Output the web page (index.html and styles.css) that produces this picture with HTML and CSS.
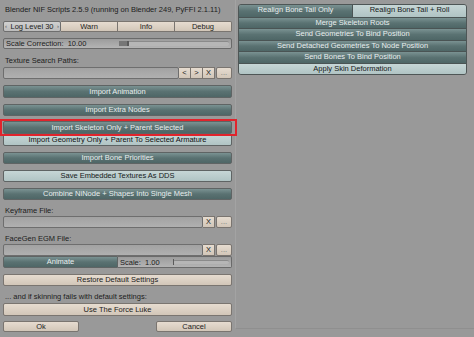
FILE: index.html
```html
<!DOCTYPE html>
<html lang="en">
<head>
  <meta charset="UTF-8" />
  <title>Blender NIF Scripts</title>
  <link rel="stylesheet" href="styles.css">
</head>
<body>
  <div class="screen">
    <div class="col left">
      <div class="title">Blender NIF Scripts 2.5.9 (running on Blender 249, PyFFI 2.1.11)</div>

      <div class="row log">
        <div class="menu"><span class="arr">&#8249;</span>Log Level 30<span class="arr">&#8250;</span></div>
        <div class="btn beige">Warn</div>
        <div class="btn beige">Info</div>
        <div class="btn beige">Debug</div>
      </div>

      <div class="row slider">
        <span class="slabel">Scale Correction:&nbsp; 10.00</span>
        <div class="track"><div class="thumb"></div></div>
      </div>

      <div class="label">Texture Search Paths:</div>
      <div class="row field-row tight">
        <div class="field"></div>
        <div class="btn beige small">&lt;</div>
        <div class="btn beige small">&gt;</div>
        <div class="btn beige small">X</div>
        <div class="btn beige dots">...</div>
      </div>

      <div class="btn dark tall">Import Animation</div>
      <div class="btn dark">Import Extra Nodes</div>
      <div class="skel-wrap">
        <div class="btn dark tall">Import Skeleton Only + Parent Selected</div>
        <div class="btn on flat">Import Geometry Only + Parent To Selected Armature</div>
        <div class="hilite"></div>
      </div>
      <div class="btn dark near">Import Bone Priorities</div>
      <div class="btn on near">Save Embedded Textures As DDS</div>
      <div class="btn dark">Combine NiNode + Shapes Into Single Mesh</div>

      <div class="label snug">Keyframe File:</div>
      <div class="row field-row flush">
        <div class="field"></div>
        <div class="btn beige small">X</div>
        <div class="btn beige dots">...</div>
      </div>

      <div class="label snug">FaceGen EGM File:</div>
      <div class="row field-row flush">
        <div class="field"></div>
        <div class="btn beige small">X</div>
        <div class="btn beige dots">...</div>
      </div>
      <div class="row anim-row flush">
        <div class="btn dark anim">Animate</div>
        <div class="slider scale">
          <span class="slabel">Scale:&nbsp; 1.00</span>
          <div class="track thin"><div class="tick"></div></div>
        </div>
      </div>

      <div class="btn beige">Restore Default Settings</div>
      <div class="label snug">... and if skinning fails with default settings:</div>
      <div class="btn beige tall tight">Use The Force Luke</div>

      <div class="row buttons">
        <div class="btn beige half">Ok</div>
        <div class="btn beige half">Cancel</div>
      </div>
    </div>

    <div class="col right">
      <div class="group">
        <div class="grow">
          <div class="btn dark seg">Realign Bone Tail Only</div>
          <div class="btn on seg">Realign Bone Tail + Roll</div>
        </div>
        <div class="btn dark seg">Merge Skeleton Roots</div>
        <div class="btn dark seg">Send Geometries To Bind Position</div>
        <div class="btn dark seg">Send Detached Geometries To Node Position</div>
        <div class="btn dark seg">Send Bones To Bind Position</div>
        <div class="btn on seg">Apply Skin Deformation</div>
      </div>
    </div>
  </div>
</body>
</html>
```

FILE: styles.css
```css
html, body {
  margin: 0;
  padding: 0;
  background-color: #999999;
  font-family: 'Liberation Sans', Arial, sans-serif;
  font-size: 7.5px;
  color: #1c1c1c;
  overflow: hidden;
}

* {
  box-sizing: border-box;
}

.screen {
  display: flex;
  gap: 3px;
  padding-left: 3px;
  width: 474px;
  height: 337px;
}

.col {
  display: flex;
  flex-direction: column;
  width: 229px;
}

.title {
  margin-top: 5px;
  height: 10px;
  line-height: 10px;
  padding-left: 2px;
  white-space: nowrap;
}

.row {
  display: flex;
  margin-top: 6px;
}

.label {
  margin-top: 7px;
  height: 10px;
  line-height: 10px;
  padding-left: 2px;
}

.label.snug { margin-top: 6px; }

.tight { margin-top: 1px !important; }
.flush { margin-top: 0 !important; }
.near { margin-top: 5px; }

.btn {
  height: 12px;
  line-height: 10px;
  margin-top: 6px;
  text-align: center;
  white-space: nowrap;
  border: 1px solid #5f6464;
  border-radius: 2px;
}

.row .btn { margin-top: 0; }

.tall { height: 13px; line-height: 11px; }

.dark {
  background: linear-gradient(#7a9292, #5a7272 50%, #4e6666);
  color: #e8eeee;
}

.on {
  background: linear-gradient(#c6d6d6, #b0c4c4);
  color: #161a1a;
}

.beige {
  background: linear-gradient(#e6dcd0, #d2c6b8);
  color: #1c1c1c;
  border-color: #7a7570;
}

.log .btn, .log .menu {
  height: 11px;
  line-height: 9px;
}

.menu {
  width: 58px;
  display: flex;
  justify-content: space-between;
  padding: 0 1px;
  background: linear-gradient(#d0d0d0, #bcbcbc);
  border: 1px solid #6e6e6e;
  border-radius: 2px;
  white-space: nowrap;
}

.arr {
  font-size: 6px;
  color: #555;
}

.log .btn { flex: 1; border-left: none; border-radius: 0; }
.log .btn:last-child { border-radius: 0 2px 2px 0; }

.slider {
  height: 11px;
  display: flex;
  align-items: center;
  background: linear-gradient(#9c9c9c, #b4b4b4);
  border: 1px solid #6a6a6a;
  border-radius: 2px;
  padding-left: 2px;
}

.slabel {
  width: 113px;
  flex: none;
}

.track {
  flex: 1;
  height: 5px;
  margin-right: 2px;
  border-top: 1px solid #8a8a8a;
  border-radius: 2px;
  background: #b6b6b6;
}

.thumb {
  width: 10px;
  height: 5px;
  margin-top: -1px;
  background: #767676;
  border-right: 2px solid #5a5a5a;
}

.field-row { height: 12px; }

.field {
  flex: 1;
  background: linear-gradient(#a2a2a2, #b0b0b0);
  border: 1px solid #6e6e6e;
  border-radius: 2px;
}

.small { width: 12px; height: 12px; border-radius: 0; border-left: none; }
.dots { width: 16px; height: 12px; margin-left: 1px !important; color: #777; }

.skel-wrap {
  position: relative;
  display: flex;
  flex-direction: column;
  margin-top: 5px;
}

.skel-wrap .btn.tall { margin-top: 0; }

.flat { margin-top: 0; height: 12px; color: #101010; }

.hilite {
  position: absolute;
  left: -3px;
  top: -2px;
  width: 237px;
  height: 17px;
  border: 2.5px solid #e0242c;
}

.anim-row { height: 12px; }

.anim { width: 115px; height: 12px; border-radius: 2px 0 0 2px; }

.scale {
  flex: 1;
  height: 12px;
  border-left: none;
  border-radius: 0 2px 2px 0;
}

.scale .slabel { width: 53px; }

.thin {
  height: 4px;
}

.tick {
  width: 1px;
  height: 6px;
  margin-top: -2px;
  background: #5a5a5a;
}

.buttons {
  justify-content: space-between;
  margin-top: 5px;
}

.half { width: 76px; height: 11px; line-height: 9px; }

.right {
  width: 239px;
  height: 329px;
  padding: 4px 0 0 2px;
  border-left: 1px solid #a3a3a3;
  border-bottom: 1px solid #8f8f8f;
}

.group {
  display: flex;
  flex-direction: column;
  width: 229px;
  border: 1px solid #4e5656;
  border-radius: 3px;
  overflow: hidden;
}

.seg {
  margin-top: 0;
  height: 11.5px;
  line-height: 10px;
  border: none;
  border-top: 1px solid #4a5454;
  border-radius: 0;
}

.group > .seg:first-child, .grow .seg { border-top: none; }

.grow { display: flex; }
.grow .seg { flex: 1; }
.grow .seg + .seg { border-left: 1px solid #4a5454; }
```
